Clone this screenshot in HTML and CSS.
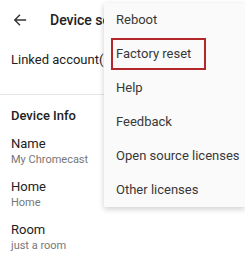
FILE: index.html
```html
<!DOCTYPE html>
<html lang="en">
<head>
    <meta charset="UTF-8">
    <title>Device settings</title>
    <link rel="stylesheet" href="styles.css">
</head>
<body>
    <div class="screen">
        <div class="toolbar">
            <svg class="back" width="14" height="14" viewBox="0 0 16 16">
                <path d="M15 8H2M8 2L2 8l6 6" fill="none" stroke="#333" stroke-width="1.6"/>
            </svg>
            <span class="title">Device settings</span>
        </div>
        <div class="row linked">Linked account(s)</div>
        <div class="divider"></div>
        <div class="section-title">Device Info</div>
        <div class="item">
            <div class="label">Name</div>
            <div class="value">My Chromecast</div>
        </div>
        <div class="item">
            <div class="label">Home</div>
            <div class="value">Home</div>
        </div>
        <div class="item">
            <div class="label">Room</div>
            <div class="value">just a room</div>
        </div>

        <!-- overflow menu, drawn over the page -->
        <ul class="menu">
            <li>Reboot</li>
            <li class="highlight">Factory reset</li>
            <li>Help</li>
            <li>Feedback</li>
            <li>Open source licenses</li>
            <li>Other licenses</li>
        </ul>
    </div>
</body>
</html>
```

FILE: styles.css
```css
body {
    margin: 0;
    background: #fff;
    font-family: Roboto, "Liberation Sans", sans-serif;
    color: #222;
}
.screen {
    position: relative;
    width: 245px;
    height: 253px;
    overflow: hidden;
}
.toolbar {
    display: flex;
    align-items: center;
    height: 40px;
    padding-left: 13px;
}
.back {
    margin-right: 23px;
}
.title {
    font-size: 14px;
    font-weight: 500;
    white-space: nowrap;
}
.row {
    font-size: 13px;
    padding-left: 11px;
    white-space: nowrap;
}
.linked {
    height: 40px;
    line-height: 40px;
}
.divider {
    height: 1px;
    background: #e6e6e6;
    margin-top: 14px;
}
.section-title {
    font-size: 13px;
    font-weight: 500;
    padding: 12px 0 0 11px;
    height: 18px;
    line-height: 18px;
}
.item {
    padding: 10px 0 0 11px;
}
.label {
    font-size: 13px;
    line-height: 17px;
}
.value {
    font-size: 11px;
    line-height: 16px;
    color: #777;
}
.menu {
    position: absolute;
    z-index: 2;
    top: 3px;
    left: 104px;
    right: 0;
    margin: 0;
    padding: 0;
    list-style: none;
    background: #fafafa;
    box-shadow: 0 2px 6px rgba(0, 0, 0, 0.2);
}
.menu li {
    height: 34px;
    line-height: 34px;
    font-size: 13px;
    color: #383838;
    padding-left: 12px;
    white-space: nowrap;
}
.menu .highlight {
    margin: 1px 0 1px 7px;
    padding-left: 3px;
    width: 88px;
    height: 28px;
    line-height: 28px;
    border: 2px solid #b3272a;
}
```
